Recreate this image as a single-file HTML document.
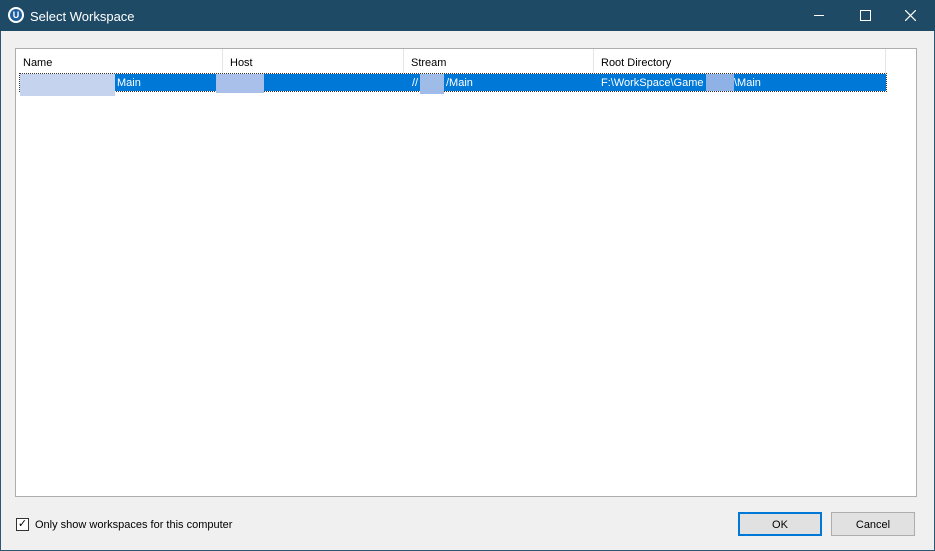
<!DOCTYPE html><html><head><style>
body{margin:0;width:935px;height:551px;background:#f0f0f0;font-family:"Liberation Sans",sans-serif;font-size:11px;position:relative;overflow:hidden}
.win{position:absolute;left:0;top:0;width:933px;height:549px;border:1px solid #2b5674}
.title{position:absolute;left:0;top:0;width:935px;height:31px;background:#1f4a66;color:#fff;font-size:13px}
.abs{position:absolute}
.list{position:absolute;left:15px;top:48px;width:900px;height:447px;background:#fff;border:1px solid #adadad}
.hdr{position:absolute;top:0;height:24px;line-height:28px;color:#000;border-right:1px solid #e5e5e5;box-sizing:border-box;padding-left:7px}
.sel{position:absolute;left:4px;top:25px;width:866px;height:17px;background:#0078d7;color:#fff;line-height:19px;outline:1px dotted #333}
.sel span{position:absolute}
.btn{position:absolute;top:512px;width:84px;height:24px;background:#e1e1e1;border:1px solid #adadad;box-sizing:border-box;text-align:center;line-height:24px}
</style></head><body>
<div class="win"></div>
<div class="title">
<div class="abs" style="left:8px;top:7px;width:16px;height:16px;border-radius:50%;background:#fff"></div>
<div class="abs" style="left:10px;top:9px;width:12px;height:12px;border-radius:50%;background:#1f5fa0;color:#fff;font-size:9px;font-weight:bold;text-align:center;line-height:12px">U</div>
<div class="abs" style="left:30px;top:9px">Select Workspace</div>
<div class="abs" style="left:814px;top:15px;width:10px;height:1px;background:#fff"></div>
<div class="abs" style="left:860px;top:10px;width:9px;height:9px;border:1px solid #fff"></div>
<svg class="abs" style="left:905px;top:10px" width="11" height="11"><path d="M0 0L11 11M11 0L0 11" stroke="#fff" stroke-width="1.2"/></svg>
</div>
<div class="list">
<div class="hdr" style="left:0;width:207px">Name</div>
<div class="hdr" style="left:207px;width:181px">Host</div>
<div class="hdr" style="left:388px;width:190px">Stream</div>
<div class="hdr" style="left:578px;width:292px">Root Directory</div>
<div class="sel">
<span style="left:0;width:95px;height:22px;background:#c6d3ef"></span>
<span style="left:97px">Main</span>
<span style="left:196px;width:48px;height:19px;background:#a8c0ea"></span>
<span style="left:392px">//</span><span style="left:400px;width:24px;height:20px;background:#9fbbe8"></span><span style="left:426px">/Main</span>
<span style="left:581px">F:\WorkSpace\Game</span><span style="left:686px;width:28px;height:17px;background:#8fb2e6"></span><span style="left:714px">\Main</span>
</div>
</div>
<div class="abs" style="left:16px;top:518px;width:11px;height:11px;border:1px solid #333;background:#fff;font-size:11px;line-height:11px;text-align:center">✓</div>
<div class="abs" style="left:35px;top:519px">Only show workspaces for this computer</div>
<div class="btn" style="left:738px;border:2px solid #0078d7;line-height:22px">OK</div>
<div class="btn" style="left:831px">Cancel</div>
</body></html>
